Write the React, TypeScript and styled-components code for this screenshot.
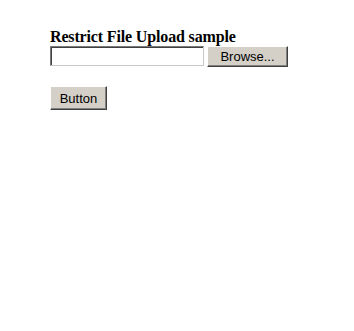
import styled, { createGlobalStyle } from "styled-components";

const GlobalStyle = createGlobalStyle`
  body {
    margin: 0;
    background: #ffffff;
  }
`

const Page = styled.form`
  padding: 27px 0 0 50px;
  display: flex;
  flex-direction: column;
  align-items: flex-start;
`

const Title = styled.strong`
  font-family: "Liberation Serif", "Times New Roman", serif;
  font-size: 16px;
  line-height: 19px;
  font-weight: 700;
  letter-spacing: -0.15px;
  color: #000000;
`

const UploadRow = styled.div`
  display: flex;
  align-items: flex-start;
  gap: 3px;
`

const PathField = styled.input`
  box-sizing: border-box;
  width: 154px;
  height: 20px;
  margin: 0;
  padding: 0 2px;
  border-style: solid;
  border-width: 1px;
  border-color: #7a7a7a #c8c8c8 #c8c8c8 #7a7a7a;
  box-shadow: inset 1px 1px 0 #404040;
  background: #ffffff;
  font-family: "Liberation Sans", Arial, sans-serif;
  font-size: 13px;
  outline: none;
`

interface ClassicButtonProps {
  $width: number
  $height: number
}

const ClassicButton = styled.button<ClassicButtonProps>`
  box-sizing: border-box;
  width: ${props => props.$width}px;
  height: ${props => props.$height}px;
  margin: 0;
  padding: 0;
  display: flex;
  align-items: center;
  justify-content: center;
  background: #d4d0c8;
  border-style: solid;
  border-width: 1px;
  border-color: #ffffff #404040 #404040 #ffffff;
  box-shadow: inset -1px -1px 0 #808080;
  font-family: "Liberation Sans", Arial, sans-serif;
  font-size: 13px;
  color: #000000;
`

const SubmitButton = styled(ClassicButton)`
  margin-top: 19px;
`

export default function App() {
  return (
    <>
      <GlobalStyle/>
      <Page onSubmit={e => e.preventDefault()}>
        <Title>Restrict File Upload sample</Title>
        <UploadRow>
          <PathField type="text" readOnly/>
          <ClassicButton type="button" $width={81} $height={21}>Browse...</ClassicButton>
        </UploadRow>
        <SubmitButton type="submit" $width={57} $height={24}>Button</SubmitButton>
      </Page>
    </>
  )
}
